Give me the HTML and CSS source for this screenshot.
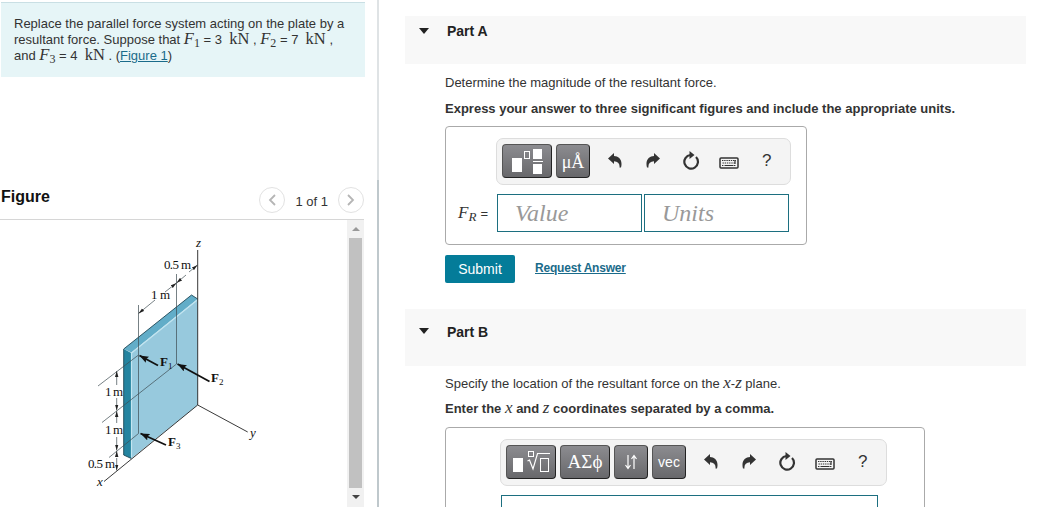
FILE: index.html
```html
<!DOCTYPE html>
<html lang="en">
<head>
    <meta charset="UTF-8">
    <meta name="viewport" content="width=device-width, initial-scale=1.0">
    <title>Resultant Force</title>
    <link rel="stylesheet" href="styles.css">
</head>
<body>
    <svg class="defs" width="0" height="0">
        <symbol id="undo" viewBox="0 0 14 15">
            <path d="M0 5.500L6 0v3c5 .2 9 4.200 7 11.500h-1.500C12 10.500 10 8.500 6 8.300V11z"/>
        </symbol>
        <symbol id="reset" viewBox="0 0 18 19">
            <path d="M8.500 4A6.800 6.800 0 1 0 14 6" fill="none" stroke="currentColor" stroke-width="2.200"/>
            <path d="M7.500 0l5 4-5 4z"/>
        </symbol>
        <symbol id="keyboard" viewBox="0 0 20 12">
            <rect x="1" y="1" width="18" height="10" rx="1" fill="none" stroke="currentColor" stroke-width="1.500"/>
            <path d="M3 3.500h14M3.500 6h13M3 8.500h2M15 8.500h2" fill="none" stroke="currentColor" stroke-width="1.200" stroke-dasharray="1.400 .8"/>
            <path d="M5.500 8.500h9M16 3v4" fill="none" stroke="currentColor" stroke-width="1.200"/>
        </symbol>
    </svg>

    <div class="left">
        <div class="problem">
            <p>Replace the parallel force system acting on the plate by a</p>
            <p>resultant force. Suppose that <span class="math"><i>F</i><sub>1</sub></span> = 3 &nbsp;<span class="math">kN</span> , <span class="math"><i>F</i><sub>2</sub></span> = 7 &nbsp;<span class="math">kN</span> ,</p>
            <p>and <span class="math"><i>F</i><sub>3</sub></span> = 4 &nbsp;<span class="math">kN</span> . (<a href="#figure">Figure 1</a>)</p>
        </div>

        <div class="figure-header">
            <h2>Figure</h2>
            <div class="pager">
                <button class="circle"><svg width="8" height="12" viewBox="0 0 8 12"><path d="M7 1L2 6l5 5"/></svg></button>
                <span>1 of 1</span>
                <button class="circle"><svg width="8" height="12" viewBox="0 0 8 12"><path d="M1 1l5 5-5 5"/></svg></button>
            </div>
        </div>

        <div class="figure-body" id="figure">
            <svg class="diagram" width="347" height="287" viewBox="0 220 347 287">
                <defs>
                    <marker id="dim" viewBox="0 0 6 4" refX="6" refY="2" markerWidth="6" markerHeight="4" markerUnits="userSpaceOnUse" orient="auto-start-reverse">
                        <path d="M0 .3L6 2 0 3.700z" fill="#222"/>
                    </marker>
                    <marker id="force" viewBox="0 0 9 7" refX="9" refY="3.500" markerWidth="9" markerHeight="7" markerUnits="userSpaceOnUse" orient="auto">
                        <path d="M0 0l9 3.500L0 7l1.500-3.500z" fill="#111"/>
                    </marker>
                </defs>

                <!-- plate -->
                <polygon points="123.7,349 191.500,295 197.700,299 131.300,352.500" fill="#62adc8"/>
                <polygon points="123.7,349 131.300,353 131.300,458.500 123.7,455" fill="#2484a0"/>
                <polygon points="131.3,352.500 197.700,299 197.700,405 131.300,458.500" fill="#97c9dd"/>
                <path d="M131.500 457V353L197 300.300" fill="none" stroke="#c3e5f0" stroke-width="1.200"/>
                <path d="M123.700 455V349L191.500 295l6.200 4M123.700 455l7.600 3.500" fill="none" stroke="#1e4756" stroke-width=".9"/>

                <g class="thin">
                    <path d="M197.700 250v155l50 27M197.700 405L104 481.500" class="axis"/>
                    <path d="M138.500 305v128.500M176.500 274v90"/>
                    <path d="M98 386l40.500-31M102 422.500l74.500-58.500M109 457.500l29.500-24"/>
                    <path d="M155 300l-16.500 13.500" marker-end="url(#dim)"/>
                    <path d="M165 292l11.500-9" marker-end="url(#dim)"/>
                    <path d="M186 275l-9.500 8" marker-end="url(#dim)"/>
                    <path d="M189 272l8.500-7" marker-end="url(#dim)"/>
                    <path d="M116.700 385v-14" marker-end="url(#dim)"/>
                    <path d="M116.700 398v12.500" marker-end="url(#dim)"/>
                    <path d="M116.700 423v-12" marker-end="url(#dim)"/>
                    <path d="M116.700 437v13.500" marker-end="url(#dim)"/>
                    <path d="M116.700 456v-5" marker-end="url(#dim)"/>
                    <path d="M116.700 458v12.500" marker-end="url(#dim)"/>
                </g>

                <g class="forces">
                    <path d="M158 365.500l-18.500-10"/>
                    <path d="M209.500 381.500l-32-17.500"/>
                    <path d="M166 445l-25.500-11.500"/>
                </g>

                <g class="labels">
                    <text x="164" y="269" textLength="27">0.5 m</text>
                    <text x="151" y="299" textLength="19">1 m</text>
                    <text x="105" y="396" textLength="18">1 m</text>
                    <text x="105" y="434" textLength="18">1 m</text>
                    <text x="88" y="468" textLength="27">0.5 m</text>
                    <text x="196" y="247" class="var">z</text>
                    <text x="250" y="437" class="var">y</text>
                    <text x="97" y="486" class="var">x</text>
                    <text x="160" y="366" class="bold">F<tspan class="sub" dy="3">1</tspan></text>
                    <text x="211" y="382" class="bold">F<tspan class="sub" dy="3">2</tspan></text>
                    <text x="168" y="446" class="bold">F<tspan class="sub" dy="3">3</tspan></text>
                </g>
            </svg>
            <div class="scrollbar">
                <span class="arrow up"></span>
                <span class="thumb"></span>
                <span class="arrow down"></span>
            </div>
        </div>
    </div>

    <div class="divider"></div>

    <div class="right">
        <div class="part-header part-a">
            <span class="caret"></span>
            <h3>Part A</h3>
        </div>
        <div class="part-body">
            <p class="question">Determine the magnitude of the resultant force.</p>
            <p class="hint">Express your answer to three significant figures and include the appropriate units.</p>
            <div class="answer-box box-a">
                <div class="toolbar">
                    <button class="tool wide">
                        <svg width="32" height="26" viewBox="0 0 32 26">
                            <path d="M1 10h10v14H1zM22 1h9v10h-9zM22 16h9v10h-9z" fill="#fff"/>
                            <path d="M22 13.500h10" stroke="#fff"/>
                            <rect x="13.500" y="3.500" width="5" height="7" fill="none" stroke="#fff"/>
                        </svg>
                    </button>
                    <button class="tool serif units">μÅ</button>
                    <div class="icons">
                        <svg class="undo"><use href="#undo"/></svg>
                        <svg class="redo"><use href="#undo"/></svg>
                        <svg class="reset"><use href="#reset"/></svg>
                        <svg class="keyboard"><use href="#keyboard"/></svg>
                        <span class="help">?</span>
                    </div>
                </div>
                <div class="fields">
                    <span class="label"><i>F</i><sub><i>R</i></sub> <b>=</b></span>
                    <div class="field">Value</div>
                    <div class="field">Units</div>
                </div>
            </div>
            <div class="actions">
                <button class="submit">Submit</button>
                <a href="#">Request Answer</a>
            </div>
        </div>

        <div class="part-header part-b">
            <span class="caret"></span>
            <h3>Part B</h3>
        </div>
        <div class="part-body">
            <p class="question">Specify the location of the resultant force on the <i>x</i>-<i>z</i> plane.</p>
            <p class="hint">Enter the <i>x</i> and <i>z</i> coordinates separated by a comma.</p>
            <div class="answer-box box-b">
                <div class="toolbar">
                    <button class="tool wide">
                        <svg width="38" height="26" viewBox="0 0 38 26">
                            <path d="M1 9h10v14H1z" fill="#fff"/>
                            <rect x="16.500" y="2.500" width="5" height="5" fill="none" stroke="#fff"/>
                            <path d="M15.500 12l2-1 3.500 9L25.500 4.500H38" fill="none" stroke="#fff" stroke-width="1.200"/>
                            <rect x="28.500" y="9.500" width="8" height="13" fill="none" stroke="#fff"/>
                        </svg>
                    </button>
                    <button class="tool serif wide">ΑΣϕ</button>
                    <button class="tool">
                        <svg width="14" height="16" viewBox="0 0 14 16">
                            <path d="M4 1v13M1.500 11L4 14.500 6.500 11M10 15V2M7.500 5L10 1.500 12.500 5" fill="none" stroke="#fff" stroke-width="1.200"/>
                        </svg>
                    </button>
                    <button class="tool">vec</button>
                    <div class="icons">
                        <svg class="undo"><use href="#undo"/></svg>
                        <svg class="redo"><use href="#undo"/></svg>
                        <svg class="reset"><use href="#reset"/></svg>
                        <svg class="keyboard"><use href="#keyboard"/></svg>
                        <span class="help">?</span>
                    </div>
                </div>
                <div class="field long"></div>
            </div>
        </div>
    </div>
</body>
</html>
```

FILE: styles.css
```css
* {
    margin: 0;
    padding: 0;
    box-sizing: border-box;
}

body {
    width: 1037px;
    height: 507px;
    overflow: hidden;
    display: flex;
    background: #fff;
    font-family: "Liberation Sans", Arial, sans-serif;
    font-size: 13px;
    color: #333;
}

button {
    font-family: inherit;
    border: none;
}

a {
    color: #1a6b8a;
}

.defs {
    position: absolute;
}

/* Left column */
.left {
    width: 377px;
    padding-top: 2px;
}

.problem {
    width: 364px;
    height: 75px;
    margin-left: 1px;
    padding: 13px 0 0 13px;
    background: #e6f5f7;
    border-top: 1px solid #c9dfe4;
    font-size: 13px;
    line-height: 16px;
    white-space: nowrap;
}

.problem p {
    height: 16px;
}

.problem sub {
    font-size: 12px;
    line-height: 0;
    vertical-align: -3px;
}

.math {
    font-family: "Liberation Serif", serif;
    font-size: 16.5px;
    line-height: 0;
}

.figure-header {
    height: 143px;
    width: 364px;
    padding: 110px 0 0 1px;
    display: flex;
    justify-content: space-between;
    border-bottom: 1px solid #d6d6d6;
}

.figure-header h2 {
    font-size: 16px;
    line-height: 19px;
    color: #111;
}

.pager {
    display: flex;
    gap: 10px;
}

.pager span {
    font-size: 13px;
    line-height: 29px;
}

.circle {
    width: 26px;
    height: 26px;
    border: 1px solid #e2e2e2;
    border-radius: 50%;
    background: #fff;
    display: flex;
    align-items: center;
    justify-content: center;
}

.circle path {
    fill: none;
    stroke: #b5b5b5;
    stroke-width: 1.8;
}

.figure-body {
    display: flex;
    height: 287px;
}

.scrollbar {
    width: 17px;
    height: 287px;
    background: #f1f1f1;
    display: flex;
    flex-direction: column;
    align-items: center;
    padding: 7px 0 8px;
    justify-content: space-between;
}

.thumb {
    width: 13px;
    height: 250px;
    background: #c1c1c1;
}

.arrow {
    border: 4px solid transparent;
}

.up {
    border-top: 0;
    border-bottom-color: #999;
}

.down {
    border-bottom: 0;
    border-top-color: #444;
}

.thin {
    fill: none;
    stroke: #3c4b50;
    stroke-width: .7;
}

.axis {
    stroke: #222;
    stroke-width: .9;
}

.forces path {
    stroke: #111;
    stroke-width: 1.8;
    marker-end: url(#force);
}

.labels {
    font-family: "Liberation Serif", serif;
    font-size: 13px;
    fill: #111;
}

.labels .var {
    font-style: italic;
}

.labels .bold {
    font-weight: bold;
}

.labels .sub {
    font-size: 9px;
    font-weight: normal;
}

.divider {
    width: 2px;
    background: linear-gradient(#dfe3e5 180px, #bfc8cc 180px);
}

/* Right column */
.right {
    width: 621px;
    height: 507px;
    overflow: hidden;
    margin-left: 26px;
}

.part-header {
    display: flex;
    background: #f8f8f8;
    padding-left: 14px;
    gap: 18px;
}

.part-a {
    height: 48px;
    margin-top: 16px;
    padding-top: 7px;
}

.part-b {
    height: 57px;
    margin-top: 26px;
    padding-top: 15px;
}

.part-header h3 {
    font-size: 14px;
    line-height: 17px;
    color: #222;
}

.caret {
    border: 5px solid transparent;
    border-top: 6px solid #222;
    border-bottom: 0;
    height: 6px;
    margin-top: 5px;
}

.part-b .caret {
    margin-top: 4px;
}

.part-body {
    padding-left: 40px;
    white-space: nowrap;
}

.question {
    height: 27px;
    padding-top: 11px;
    line-height: 16px;
}

.hint {
    height: 16px;
    font-weight: bold;
    line-height: 16px;
    margin-top: 10px;
}

.part-b + .part-body .question {
    height: 26px;
    padding-top: 10px;
}

.part-b + .part-body .hint {
    margin-top: 9px;
}

.question i,
.hint i {
    font-family: "Liberation Serif", serif;
    font-size: 17px;
    font-weight: normal;
    line-height: 0;
}

.answer-box {
    border: 1px solid #aaa;
    border-radius: 4px;
}

.box-a {
    width: 362px;
    height: 119px;
    margin-top: 9px;
    padding: 11px 15px 0 12px;
}

.box-b {
    width: 480px;
    height: 119px;
    margin-top: 10px;
    padding: 11px 37px 0 54px;
}

.toolbar {
    display: flex;
    align-items: flex-start;
    gap: 4px;
    height: 47px;
    padding: 5px;
    background: #f4f4f4;
    border: 1px solid #ddd;
    border-radius: 7px;
}

.box-a .toolbar {
    margin-left: 38px;
}

.tool {
    width: 34px;
    height: 34px;
    border: 1px solid #555;
    border-right-color: #222;
    border-bottom-color: #222;
    border-radius: 4px;
    background: linear-gradient(#8c8c90, #68686b);
    color: #fff;
    font-size: 14px;
    display: flex;
    align-items: center;
    justify-content: center;
}

.tool.wide {
    width: 50px;
}

.serif {
    font-family: "Liberation Serif", serif;
    font-size: 19px;
}

.units {
    font-size: 18px;
    padding-top: 3px;
}

.icons {
    flex: 1;
    height: 34px;
    display: flex;
    align-items: center;
    color: #333;
}

.icons svg {
    fill: #333;
}

.undo,
.redo {
    width: 14px;
    height: 15px;
    margin: 0 0 2px 14px;
}

.redo {
    margin-left: 24px;
    transform: scaleX(-1);
}

.reset {
    width: 18px;
    height: 19px;
    margin: 0 0 1px 22px;
}

.keyboard {
    width: 20px;
    height: 12px;
    margin: 4px 0 0 19px;
}

.help {
    font-size: 17px;
    margin-left: 23px;
}

.fields {
    display: flex;
    margin-top: 9px;
}

.label {
    width: 39px;
    font-family: "Liberation Serif", serif;
    font-size: 17px;
    line-height: 37px;
}

.label sub {
    font-size: 13px;
    line-height: 0;
    vertical-align: -3px;
}

.label b {
    font-family: "Liberation Sans", sans-serif;
    font-size: 13px;
    font-weight: normal;
}

.field {
    width: 145px;
    height: 38px;
    margin-right: 2px;
    padding-left: 17px;
    border: 1px solid #1c6f80;
    font: italic 24px/36px "Liberation Serif", serif;
    color: #999;
}

.field.long {
    width: 377px;
    margin: 9px 0 0 1px;
}

.actions {
    display: flex;
    gap: 20px;
    margin-top: 10px;
}

.submit {
    width: 70px;
    height: 28px;
    border-radius: 2px;
    background: #047c99;
    color: #fff;
    font-size: 14px;
}

.actions a {
    font-size: 12px;
    font-weight: bold;
    letter-spacing: -.2px;
    line-height: 26px;
}
```
